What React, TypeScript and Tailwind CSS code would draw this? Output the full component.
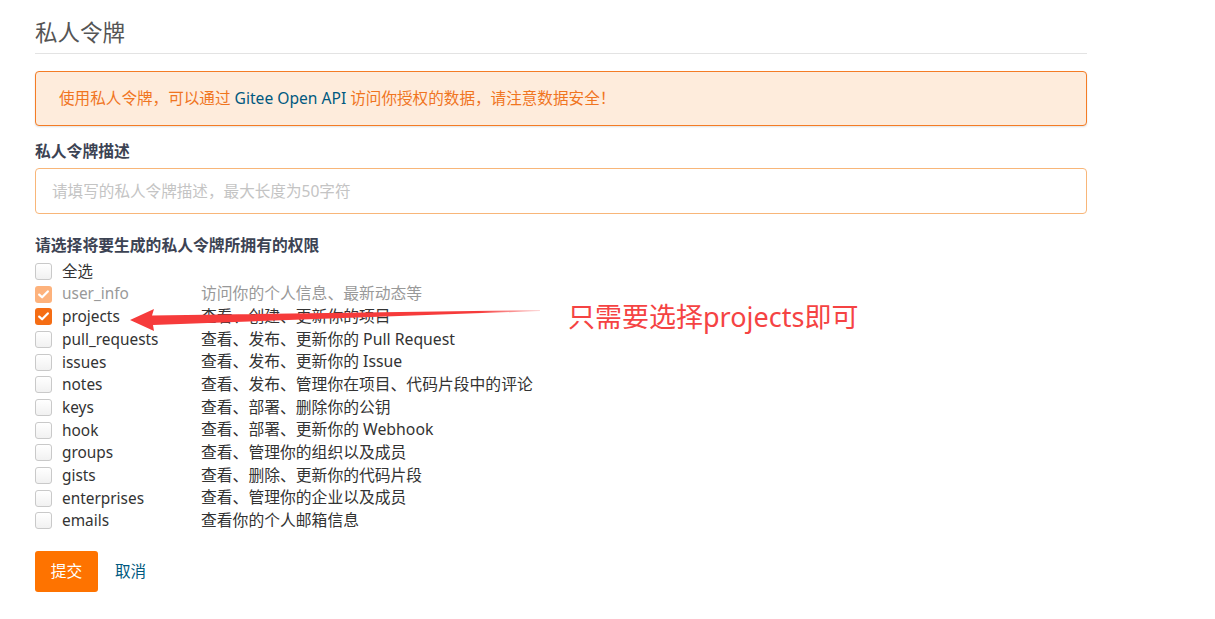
import { useState } from "react";

const scopes = [
  { name: "user_info", desc: "访问你的个人信息、最新动态等", checked: true, disabled: true },
  { name: "projects", desc: "查看、创建、更新你的项目", checked: true },
  { name: "pull_requests", desc: "查看、发布、更新你的 Pull Request" },
  { name: "issues", desc: "查看、发布、更新你的 Issue" },
  { name: "notes", desc: "查看、发布、管理你在项目、代码片段中的评论" },
  { name: "keys", desc: "查看、部署、删除你的公钥" },
  { name: "hook", desc: "查看、部署、更新你的 Webhook" },
  { name: "groups", desc: "查看、管理你的组织以及成员" },
  { name: "gists", desc: "查看、删除、更新你的代码片段" },
  { name: "enterprises", desc: "查看、管理你的企业以及成员" },
  { name: "emails", desc: "查看你的个人邮箱信息" },
];

const Box = ({ checked, disabled }: { checked?: boolean; disabled?: boolean }) => {
  if (checked) {
    return (
      <span
        className={`w-[17px] h-[17px] rounded-[3px] flex items-center justify-center shrink-0 ${
          disabled ? "bg-[#fdb27c]" : "bg-[#f56d14]"
        }`}
      >
        <svg width="11" height="9" viewBox="0 0 11 9">
          <path d="M1.2 4.6 L4.1 7.3 L9.8 1.4" fill="none" stroke="white" strokeWidth="2.2" strokeLinecap="round" strokeLinejoin="round" />
        </svg>
      </span>
    );
  }
  return (
    <span className="w-[17px] h-[17px] rounded-[3px] border border-[#c9c9c9] bg-gradient-to-b from-white to-[#f1f1f1] shrink-0" />
  );
};

export default function App() {
  const [desc, setDesc] = useState("");

  return (
    <div
      className="relative w-[1215px] h-[619px] bg-white text-[#333] overflow-hidden"
      style={{ fontFamily: '"Noto Sans", "Noto Sans CJK SC", sans-serif' }}
    >
      <div className="w-[1052px] ml-[35px] pt-[18px]">
        <div className="text-[22.5px] leading-[30px] text-[#555] pb-[5px] border-b border-[#e3e3e3]">私人令牌</div>

        <div className="mt-[17px] h-[55px] bg-[#feecdc] border border-[#f47c25] rounded-[4px] shadow-[0_1px_2px_rgba(0,0,0,0.12)] flex items-center pl-[23px] text-[15.6px] text-[#f0751f]">
          使用私人令牌，可以通过&nbsp;<span className="text-[#005980]">Gitee Open API</span>&nbsp;访问你授权的数据，请注意数据安全！
        </div>

        <div className="mt-[15px] text-[15.8px] font-bold text-[#3c4353] leading-[20px]">私人令牌描述</div>
        <input
          value={desc}
          onChange={(e) => setDesc(e.target.value)}
          placeholder="请填写的私人令牌描述，最大长度为50字符"
          className="mt-[7px] w-full h-[46px] border border-[#f8b679] rounded-[4px] px-[16px] text-[15.6px] outline-none placeholder:text-[#c4c4c4]"
        />

        <div className="mt-[21px] text-[15.8px] font-bold text-[#3c4353] leading-[20px]">请选择将要生成的私人令牌所拥有的权限</div>

        <div className="mt-[5px] flex flex-col text-[15.4px]">
          <div className="h-[22.7px] flex items-center">
            <Box />
            <span className="ml-[10px]">全选</span>
          </div>
          {scopes.map((s) => (
            <div key={s.name} className={`h-[22.7px] flex items-center ${s.disabled ? "text-[#999]" : "text-[#333]"}`}>
              <Box checked={s.checked} disabled={s.disabled} />
              <span className="ml-[10px] w-[139px]">{s.name}</span>
              <span className="text-[15.8px]">{s.desc}</span>
            </div>
          ))}
        </div>

        <div className="mt-[19px] flex items-center">
          <button className="w-[63px] h-[41px] bg-[#fe7300] text-white text-[15.8px] rounded-[3px]">提交</button>
          <a className="ml-[17px] text-[15.6px] text-[#005980]">取消</a>
        </div>
      </div>

      <svg className="absolute left-[128px] top-[306px]" width="420" height="28" viewBox="0 0 420 28">
        <defs>
          <linearGradient id="ar" x1="0" x2="1" y1="0" y2="0">
            <stop offset="0" stopColor="#f63b3b" />
            <stop offset="0.85" stopColor="#f63b3b" />
            <stop offset="1" stopColor="#f63b3b" stopOpacity="0.2" />
          </linearGradient>
        </defs>
        <path d="M2 14 L26 3 L24 9.5 L412 4 L412 5 L25 19 L26 25 Z" fill="url(#ar)" />
      </svg>

      <div className="absolute left-[568px] top-[298px] text-[27px] leading-[38px] text-[#f54343]">只需要选择projects即可</div>
    </div>
  );
}
